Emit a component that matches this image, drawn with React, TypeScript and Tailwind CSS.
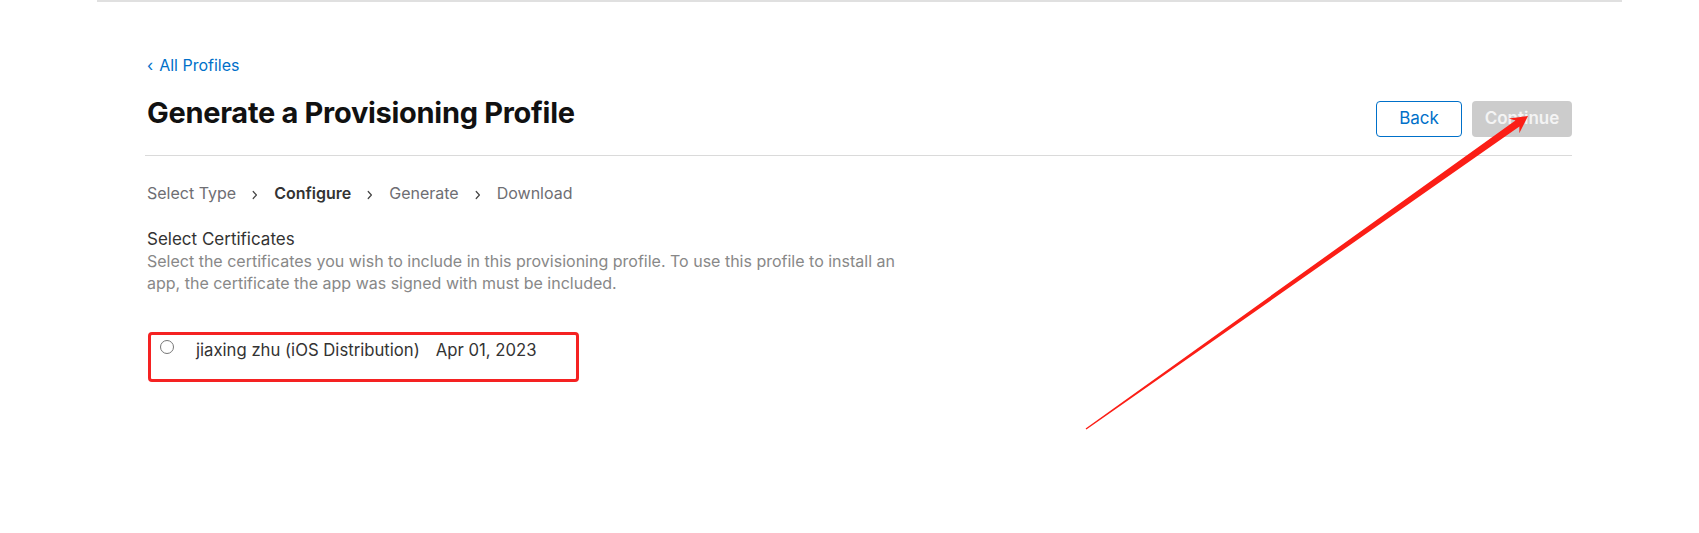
import React from "react";

function Chevron() {
  return (
    <svg width="6" height="10" viewBox="0 0 6 10" className="mx-[16px] mt-[9px] shrink-0">
      <path d="M1.2 1.5 L4.4 5 L1.2 8.5" fill="none" stroke="#444" strokeWidth="1.2" strokeLinecap="round" strokeLinejoin="round" />
    </svg>
  );
}

export default function App() {
  return (
    <div className="relative w-[1699px] h-[533px] overflow-hidden bg-white font-['Inter',_'Liberation_Sans',_sans-serif]">
      <div className="ml-[97px] w-[1525px] h-[2px] bg-[#e0e0e0]" />
      <div className="ml-[147px] w-[1425px] pt-[51px]">
        <a className="block -ml-[1px] text-[16px] leading-[25px] text-[#0070c9]">
          <span className="mr-[6px] ml-[1px]">‹</span>All Profiles
        </a>
        <div className="mt-[18px] flex justify-between border-b border-[#dadada] pb-[18px] -ml-[2px] pl-[2px]">
          <h1 className="text-[29px] leading-[34px] font-bold text-[#111] tracking-[-0.01em]">
            Generate a Provisioning Profile
          </h1>
          <div className="mt-[5px] flex gap-[10px]">
            <button className="w-[86px] h-[36px] rounded-[4px] border border-[#0070c9] text-[17px] text-[#0070c9]">
              Back
            </button>
            <button className="w-[100px] h-[36px] rounded-[4px] bg-[#cccccc] text-[17px] font-semibold text-[#f4f4f4]">
              Continue
            </button>
          </div>
        </div>
        <div className="mt-[25px] flex items-start text-[16px] leading-[25px] text-[#6e6e73]">
          <span>Select Type</span>
          <Chevron />
          <span className="font-semibold text-[#333]">Configure</span>
          <Chevron />
          <span>Generate</span>
          <Chevron />
          <span>Download</span>
        </div>
        <div className="mt-[22px] text-[17px] leading-[22px] text-[#333]">Select Certificates</div>
        <p className="w-[770px] text-[16px] leading-[22px] text-[#888]">
          Select the certificates you wish to include in this provisioning profile. To use this profile to install an app, the certificate the app was signed with must be included.
        </p>
        <div className="mt-[38px] ml-[1px] w-[431px] h-[50px] rounded-[4px] border-[3px] border-[#f52222] flex items-start pt-[4px] pl-[9px]">
          <span className="mt-[1px] w-[14px] h-[14px] rounded-full border border-[#777] bg-white shrink-0" />
          <span className="ml-[22px] text-[16.7px] leading-[22px] text-[#333]">jiaxing zhu (iOS Distribution)</span>
          <span className="ml-[16px] text-[16.7px] leading-[22px] text-[#333]">Apr 01, 2023</span>
        </div>
      </div>
      <svg className="absolute left-0 top-0 pointer-events-none" width="1699" height="533" viewBox="0 0 1699 533">
        <polygon
          points="1086.4,429.6 1519.4,126.4 1519.3,133.2 1528,116 1508.9,118.4 1515.4,120.6 1085.6,428.4"
          fill="#fb1e16"
        />
      </svg>
    </div>
  );
}
